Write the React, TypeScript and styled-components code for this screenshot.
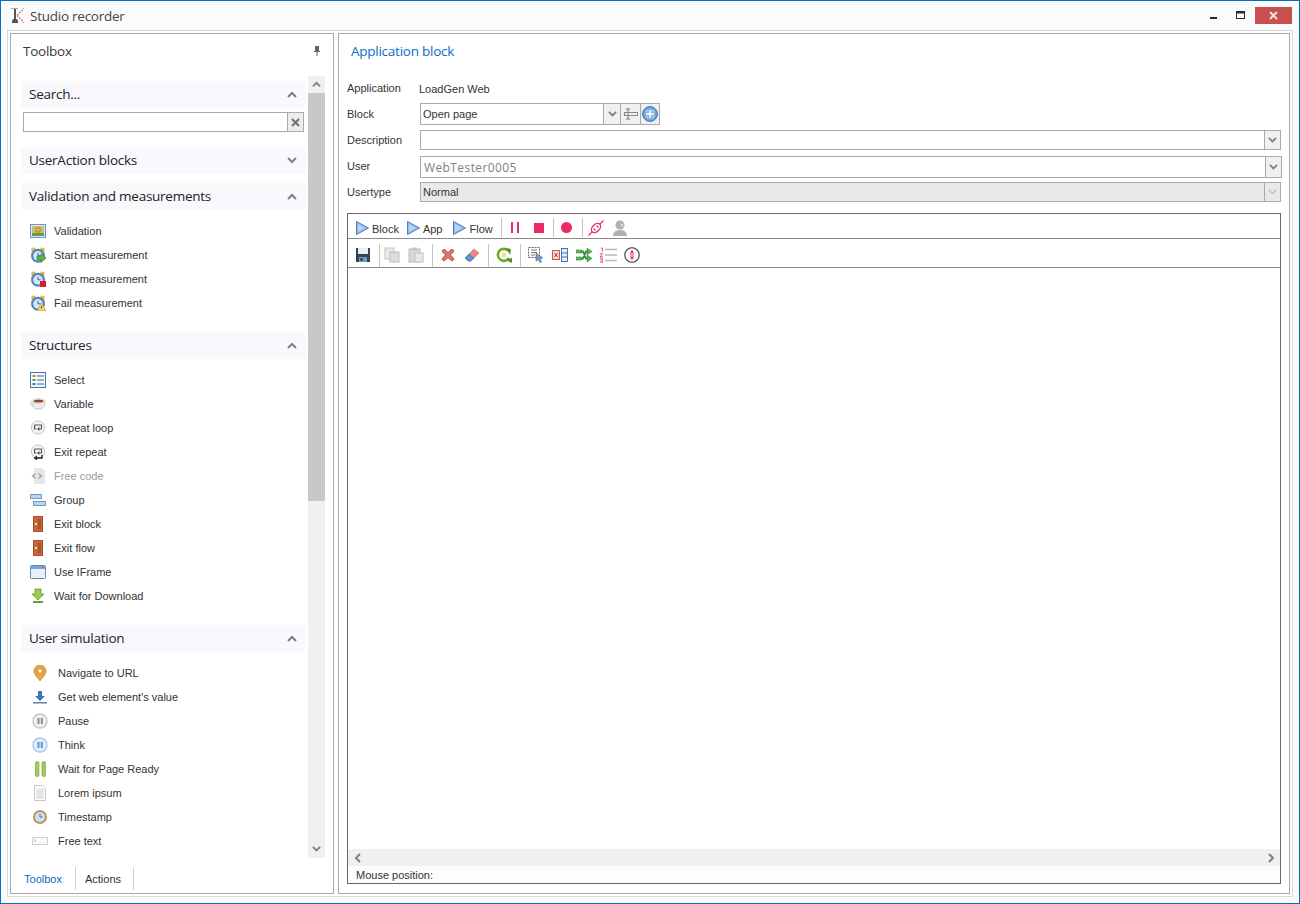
import styled, { createGlobalStyle } from "styled-components";
import type { ReactNode } from "react";

const GlobalStyle = createGlobalStyle`
  html, body {
    margin: 0;
    padding: 0;
    background: #fbfbfb;
  }
  * {
    box-sizing: border-box;
  }
`;

const UI_FONT = `"Open Sans", "Noto Sans", "Liberation Sans", sans-serif`;
const SMALL_FONT = `"Liberation Sans", "Noto Sans", sans-serif`;

const Window = styled.div`
  width: 1300px;
  height: 904px;
  display: flex;
  flex-direction: column;
  border: 1px solid #0072c6;
  background: #fbfbfb;
  padding: 0 6px 6px 6px;
  font-family: ${SMALL_FONT};
  overflow: hidden;
`;

const TitleBar = styled.div`
  height: 29px;
  flex: none;
  display: flex;
  align-items: center;
  padding-left: 3px;
`;

const TitleText = styled.span`
  font-family: ${UI_FONT};
  font-size: 13.5px;
  letter-spacing: -0.25px;
  color: #444;
  margin-left: 4px;
  flex: 1;
`;

const WinButtons = styled.div`
  display: flex;
  align-items: flex-start;
  height: 100%;
`;

const WinBtn = styled.div<{ $w: number }>`
  width: ${(p) => p.$w}px;
  height: 17px;
  margin-top: 6px;
  display: flex;
  align-items: center;
  justify-content: center;
`;

const CloseBtn = styled(WinBtn)`
  background: #c75050;
  margin-left: 1px;
  margin-right: 1px;
`;

const Frame = styled.div`
  flex: 1;
  min-height: 0;
  display: flex;
  gap: 4px;
  padding: 2px;
  border: 1px solid #d8d8d8;
  background: #fff;
`;

const Panel = styled.div<{ $w: number }>`
  width: ${(p) => p.$w}px;
  flex: none;
  display: flex;
  flex-direction: column;
  border: 1px solid #a9a9a9;
  background: #fff;
`;

const PanelHead = styled.div`
  height: 42px;
  flex: none;
  display: flex;
  align-items: center;
  justify-content: space-between;
  padding: 0 12px 8px 12px;
`;

const PanelTitle = styled.span<{ $blue?: boolean }>`
  font-family: ${UI_FONT};
  font-size: 13.5px;
  letter-spacing: -0.25px;
  color: ${(p) => (p.$blue ? "#0a6cc4" : "#3a3a3a")};
`;

const Scroller = styled.div`
  flex: 1;
  min-height: 0;
  display: flex;
  gap: 2px;
  padding: 0 8px 0 10px;
`;

const ToolList = styled.div`
  width: 285px;
  flex: none;
  padding-top: 5px;
`;

const SectionHead = styled.div<{ $mt: number }>`
  height: 27px;
  margin-top: ${(p) => p.$mt}px;
  display: flex;
  align-items: center;
  justify-content: space-between;
  padding: 0 9px 1px 8px;
  background: #f8f8fd;
  font-family: ${UI_FONT};
  font-size: 13.5px;
  letter-spacing: -0.25px;
  color: #222;
`;

const SearchBox = styled.div`
  height: 20px;
  margin: 4px 2px 0 2px;
  display: flex;
  justify-content: flex-end;
  border: 1px solid #aaa;
  background: #fff;
`;

const ClearBtn = styled.div`
  width: 16px;
  display: flex;
  align-items: center;
  justify-content: center;
  background: #ececec;
  border-left: 1px solid #aaa;
`;

const ItemList = styled.div`
  padding-top: 9px;
`;

const Item = styled.div<{ $wide?: boolean; $off?: boolean }>`
  height: 24px;
  display: flex;
  align-items: center;
  gap: ${(p) => (p.$wide ? 10 : 8)}px;
  padding-left: ${(p) => (p.$wide ? 11 : 9)}px;
  font-size: 11px;
  color: ${(p) => (p.$off ? "#9a9a9a" : "#333")};
`;

const VScroll = styled.div`
  width: 17px;
  flex: none;
  display: flex;
  flex-direction: column;
  background: #f0f0f0;
`;

const ScrollArrow = styled.div`
  height: 17px;
  flex: none;
  display: flex;
  align-items: center;
  justify-content: center;
`;

const VThumb = styled.div`
  height: 408px;
  flex: none;
  background: #c8c8c8;
`;

const VRest = styled.div`
  flex: 1;
`;

const Tabs = styled.div`
  height: 23px;
  flex: none;
  margin: 9px 0 3px 0;
  display: flex;
`;

const Tab = styled.div<{ $w: number; $on?: boolean }>`
  width: ${(p) => p.$w}px;
  display: flex;
  align-items: center;
  justify-content: center;
  padding-right: ${(p) => (p.$on ? 0 : 3)}px;
  border-right: 1px solid #d0d0d0;
  font-size: 11px;
  color: ${(p) => (p.$on ? "#0a6cc4" : "#333")};
`;

const Form = styled.div`
  flex: none;
  display: flex;
  flex-direction: column;
  padding: 2px 8px 0 8px;
`;

const FormRow = styled.div<{ $h: number; $mt: number }>`
  height: ${(p) => p.$h}px;
  margin-top: ${(p) => p.$mt}px;
  display: flex;
  align-items: center;
  font-size: 11px;
  color: #333;
`;

const Label = styled.span<{ $up?: boolean }>`
  width: 73px;
  flex: none;
  position: relative;
  top: ${(p) => (p.$up ? -1 : 0)}px;
`;

const PlainValue = styled.span`
  margin-left: -1px;
  position: relative;
  top: 1px;
`;

const Combo = styled.div<{ $w?: number; $over?: boolean; $off?: boolean }>`
  ${(p) => (p.$w ? `width: ${p.$w}px;` : "flex: 1;")}
  ${(p) => (p.$over ? "margin-right: -1px;" : "")}
  height: 100%;
  display: flex;
  border: 1px solid #aaa;
  background: ${(p) => (p.$off ? "#e9e9e9" : "#fff")};
`;

const ComboText = styled.div<{ $big?: boolean; $grey?: boolean }>`
  flex: 1;
  display: flex;
  align-items: center;
  padding-left: ${(p) => (p.$big ? 3 : 2)}px;
  font-family: ${(p) => (p.$big ? UI_FONT : SMALL_FONT)};
  font-size: ${(p) => (p.$big ? 12 : 11)}px;
  letter-spacing: ${(p) => (p.$big ? "0.4px" : "0")};
  color: ${(p) => (p.$grey ? "#808080" : "#333")};
`;

const ComboBtn = styled.div<{ $w: number; $off?: boolean }>`
  width: ${(p) => p.$w}px;
  flex: none;
  display: flex;
  align-items: center;
  justify-content: center;
  border-left: 1px solid #aaa;
  background: ${(p) => (p.$off ? "#e9e9e9" : "#f0f0f0")};
`;

const Designer = styled.div`
  flex: 1;
  min-height: 0;
  margin: 11px 8px 9px 8px;
  display: flex;
  flex-direction: column;
  border: 1px solid #666;
`;

const ToolRow = styled.div<{ $h: number; $pl: number; $pt: number }>`
  height: ${(p) => p.$h}px;
  flex: none;
  display: flex;
  align-items: center;
  padding-left: ${(p) => p.$pl}px;
  padding-top: ${(p) => p.$pt}px;
  border-bottom: 1px solid #8a8a8a;
`;

const TextTool = styled.div<{ $ml?: number }>`
  display: flex;
  align-items: center;
  gap: 3px;
  margin-left: ${(p) => p.$ml ?? 0}px;
  font-size: 11px;
  color: #333;
  line-height: 14px;
`;

const ToolLabel = styled.span`
  position: relative;
  top: 1px;
`;

const IconTool = styled.div`
  width: 24px;
  height: 20px;
  flex: none;
  display: flex;
  align-items: center;
  justify-content: center;
`;

const Sep = styled.div<{ $l: number; $r: number; $h: number }>`
  width: 1px;
  height: ${(p) => p.$h}px;
  flex: none;
  margin: 0 ${(p) => p.$r}px 0 ${(p) => p.$l}px;
  background: #c4c4c4;
`;

const Canvas = styled.div`
  flex: 1;
  background: #fff;
`;

const HScroll = styled.div`
  height: 17px;
  flex: none;
  display: flex;
  align-items: center;
  justify-content: space-between;
  padding: 0 5px 0 6px;
  background: #f0f0f0;
`;

const StatusBar = styled.div`
  height: 17px;
  flex: none;
  display: flex;
  align-items: center;
  padding-left: 8px;
  background: #fdfdfd;
  font-size: 11px;
  color: #333;
`;

const Svg = ({ w = 16, h = 16, children }: { w?: number; h?: number; children: ReactNode }) => (
  <svg width={w} height={h} viewBox={`0 0 ${w} ${h}`} style={{ flex: "none", display: "block" }}>
    {children}
  </svg>
);

const Chevron = ({ up, color = "#808080", size = 10 }: { up?: boolean; color?: string; size?: number }) => (
  <svg width={size} height={size * 0.7} viewBox="0 0 10 7" style={{ display: "block" }}>
    <polyline points={up ? "1,6 5,2 9,6" : "1,1 5,5 9,1"} fill="none" stroke={color} strokeWidth="2" />
  </svg>
);

const ChevronSide = ({ left }: { left?: boolean }) => (
  <svg width="7" height="10" viewBox="0 0 7 10" style={{ display: "block" }}>
    <polyline points={left ? "6,1 2,5 6,9" : "1,1 5,5 1,9"} fill="none" stroke="#808080" strokeWidth="2" />
  </svg>
);

const Logo = () => (
  <Svg w={16} h={17}>
    <path d="M4 2h2v10H4zM3 12h4l1 2v2H2v-2z" fill="#555" />
    <path d="M1 1.5h7" stroke="#aaa" strokeWidth="1" />
    <path d="M7 8.5L14 1.5M7 8.5l7 7" stroke="#e2657f" strokeWidth="1.2" strokeDasharray="2 1" fill="none" />
  </Svg>
);

const PinIcon = () => (
  <Svg w={8} h={10}>
    <path d="M2 0h4v5h1v1H1V5h1zM3.5 6h1v4h-1z" fill="#666" />
  </Svg>
);

const XMark = ({ color = "#707070" }: { color?: string }) => (
  <svg width="9" height="9" viewBox="0 0 9 9" style={{ display: "block" }}>
    <path d="M1 1l7 7M8 1L1 8" stroke={color} strokeWidth="2" />
  </svg>
);

const ValidationIcon = () => (
  <Svg>
    <rect x="0.5" y="1.5" width="15" height="13" fill="#dfe8f4" stroke="#7c8fc0" />
    <rect x="2" y="3" width="12" height="10" fill="#b8c870" />
    <rect x="2" y="10" width="12" height="3" fill="#5fa04a" />
    <circle cx="8" cy="7" r="3" fill="#d98a3c" />
    <circle cx="8" cy="7" r="1" fill="#f3d488" />
  </Svg>
);

const ClockBase = ({ children }: { children?: ReactNode }) => (
  <Svg>
    <circle cx="3.5" cy="2.8" r="2.3" fill="#e8b73e" />
    <circle cx="12.5" cy="2.8" r="2.3" fill="#e8b73e" />
    <circle cx="8" cy="8.8" r="7" fill="#4d86bd" />
    <circle cx="8" cy="8.8" r="4.8" fill="#d6e6f5" />
    <path d="M8 5.8v3h2.5" fill="none" stroke="#44607c" strokeWidth="1" />
    {children}
  </Svg>
);

const StartClock = () => (
  <ClockBase>
    <path d="M7 9h4V6.5L16 11l-5 4.5V13H7z" fill="#5cb050" stroke="#2f7a30" strokeWidth="0.6" />
  </ClockBase>
);

const StopClock = () => (
  <ClockBase>
    <rect x="10" y="10" width="6" height="6" fill="#e01b2f" />
  </ClockBase>
);

const FailClock = () => (
  <ClockBase>
    <path d="M11.5 8l4.5 8H7z" fill="#f2d36a" stroke="#b8923a" strokeWidth="0.6" />
    <path d="M11.5 11v2.4" stroke="#7a5a1a" strokeWidth="1" />
  </ClockBase>
);

const SelectIcon = () => (
  <Svg>
    <rect x="0.5" y="0.5" width="15" height="15" fill="#f4f8fd" stroke="#3f78b5" />
    <rect x="2.5" y="3" width="3" height="2" fill="#c9823a" />
    <rect x="2.5" y="7" width="3" height="2" fill="#5b9c40" />
    <rect x="2.5" y="11" width="3" height="2" fill="#3f78b5" />
    <path d="M7 4h7M7 8h7M7 12h7" stroke="#44638a" strokeWidth="1" />
  </Svg>
);

const CupIcon = () => (
  <Svg>
    <path d="M2 5h13c0 5-2 8-4.5 8h-4C4 13 2 10 2 5z" fill="#ececec" stroke="#c4c4c4" />
    <path d="M2 6C-1 6 0 10 3 10" fill="none" stroke="#c4c4c4" />
    <ellipse cx="8.5" cy="5" rx="6.5" ry="2.4" fill="#fafafa" stroke="#c4c4c4" strokeWidth="0.6" />
    <ellipse cx="8.5" cy="5" rx="5" ry="1.6" fill="#8b4a32" />
  </Svg>
);

const LoopGlyph = () => (
  <>
    <circle cx="8" cy="7.5" r="6.6" fill="#f4f4f4" stroke="#c4c4c4" />
    <path d="M4.5 5h7v4H9.5M4.5 5v4h2" fill="none" stroke="#555" strokeWidth="1.1" />
    <path d="M9.5 7v4L7 9z" fill="#555" />
  </>
);

const RepeatIcon = () => (
  <Svg>
    <LoopGlyph />
  </Svg>
);

const ExitRepeatIcon = () => (
  <Svg>
    <LoopGlyph />
    <path d="M12 11v3H6" fill="none" stroke="#222" strokeWidth="1.4" />
    <path d="M7 11.5v5L3.5 14z" fill="#222" />
  </Svg>
);

const CodeIcon = () => (
  <Svg>
    <path d="M4 0h8l3 3v13H4z" fill="#e6e6e6" />
    <path d="M5 5L1.5 8 5 11l1-1-2-2 2-2zM9 5l3.5 3L9 11l-1-1 2-2-2-2z" fill="#a8a8a8" />
  </Svg>
);

const GroupIcon = () => (
  <Svg>
    <rect x="0.5" y="2.5" width="11" height="4" fill="#bcd4ec" stroke="#6e9cc8" />
    <rect x="3.5" y="9.5" width="12" height="4" fill="#bcd4ec" stroke="#6e9cc8" />
  </Svg>
);

const DoorIcon = () => (
  <Svg>
    <rect x="3" y="0" width="10" height="16" fill="#a9492a" />
    <rect x="4" y="1" width="8" height="14" fill="#c26a3a" />
    <rect x="8" y="3" width="3" height="10" fill="#a9552c" />
    <rect x="5" y="7" width="2" height="2" fill="#f5e3c8" />
  </Svg>
);

const FrameIcon = () => (
  <Svg>
    <rect x="0.5" y="1.5" width="15" height="13" rx="1" fill="#e9f0f9" stroke="#5b8cc0" />
    <rect x="1" y="2" width="14" height="3" fill="#79a6d6" />
    <rect x="12" y="2.5" width="2" height="1.5" fill="#d9534f" />
  </Svg>
);

const DownloadIcon = () => (
  <Svg>
    <path d="M5 1h6v5h3l-6 6-6-6h3z" fill="#9ccc50" stroke="#5a8f2c" strokeWidth="0.7" />
    <rect x="3" y="13" width="10" height="2" fill="#6a9a3a" />
  </Svg>
);

const PinMapIcon = () => (
  <Svg>
    <path d="M8 0a6 6 0 0 1 6 6c0 4-4 7-6 10-2-3-6-6-6-10a6 6 0 0 1 6-6z" fill="#eba23d" stroke="#c47f25" strokeWidth="0.6" />
    <circle cx="8" cy="6" r="2.4" fill="#fbeed0" stroke="#a9721f" strokeWidth="0.6" />
  </Svg>
);

const ArrowDownIcon = () => (
  <Svg>
    <path d="M6 2h4v5h3l-5 5-5-5h3z" fill="#3b78b8" />
    <rect x="1" y="13" width="14" height="1.5" fill="#5a7fa6" />
  </Svg>
);

const PauseIcon = ({ blue }: { blue?: boolean }) => (
  <Svg>
    <circle cx="8" cy="8" r="7" fill={blue ? "#e4eefa" : "#f0f0f0"} stroke={blue ? "#a8c8ec" : "#c6c6c6"} strokeWidth="1.4" />
    <path d="M5.5 5h2v6h-2zM8.8 5h2v6h-2z" fill={blue ? "#5a93d6" : "#8a8a8a"} />
  </Svg>
);

const GreenPauseIcon = () => (
  <Svg>
    <rect x="3.5" y="0.5" width="3.4" height="15" rx="1.5" fill="#a4cc58" stroke="#74a036" strokeWidth="0.7" />
    <rect x="10" y="0.5" width="3.4" height="15" rx="1.5" fill="#a4cc58" stroke="#74a036" strokeWidth="0.7" />
  </Svg>
);

const DocIcon = () => (
  <Svg>
    <path d="M2.5 0.5h8l3 3v12h-11z" fill="#fbfbfb" stroke="#c8c8c8" />
    <path d="M4.5 5h7M4.5 7h7M4.5 9h7M4.5 11h7M4.5 13h7" stroke="#c4c4c4" strokeWidth="0.9" />
  </Svg>
);

const TimestampIcon = () => (
  <Svg>
    <circle cx="8" cy="8" r="7" fill="#b8975a" />
    <circle cx="8" cy="8" r="5" fill="#cfe0f5" />
    <path d="M8 4.5V8h2.5" fill="none" stroke="#3c6ba4" strokeWidth="1" />
  </Svg>
);

const TextFieldIcon = () => (
  <Svg>
    <rect x="0.5" y="4.5" width="15" height="7" fill="#fafafa" stroke="#cfcfcf" />
    <path d="M3 6v3" stroke="#bdbdbd" />
  </Svg>
);

const ComboDrop = () => <Chevron color="#808080" size={9} />;

const AttachIcon = () => (
  <Svg w={14} h={12}>
    <path d="M4 1v10M2 1h4M2 11h4" stroke="#777" fill="none" />
    <rect x="0.5" y="4.5" width="13" height="3" fill="none" stroke="#888" />
  </Svg>
);

const AddIcon = () => (
  <Svg>
    <circle cx="8" cy="8" r="7.4" fill="#6ca0dc" stroke="#3f73b5" />
    <circle cx="8" cy="8" r="5.4" fill="#a4c8ee" />
    <path d="M6.8 3.5h2.4v3.3h3.3v2.4H9.2v3.3H6.8V9.2H3.5V6.8h3.3z" fill="#fff" stroke="#3f73b5" strokeWidth="0.5" />
  </Svg>
);

const PlayIcon = () => (
  <Svg w={13} h={14}>
    <path d="M0.5 0.5L12.5 7 0.5 13.5z" fill="#8fb9e8" stroke="#4b83c2" />
    <path d="M2 3v8l7-4z" fill="#b8d4f2" />
  </Svg>
);

const PINK = "#ec2a63";

const PauseBars = () => (
  <Svg w={10} h={11}>
    <rect x="1" y="0" width="2" height="11" fill={PINK} />
    <rect x="7" y="0" width="2" height="11" fill={PINK} />
  </Svg>
);

const StopSquare = () => (
  <Svg w={10} h={10}>
    <rect width="10" height="10" fill={PINK} />
  </Svg>
);

const RecordDot = () => (
  <Svg w={11} h={11}>
    <circle cx="5.5" cy="5.5" r="5.5" fill={PINK} />
  </Svg>
);

const LinkIcon = () => (
  <Svg>
    <ellipse cx="8" cy="8" rx="3.6" ry="5.4" transform="rotate(45 8 8)" fill="#fff" stroke={PINK} strokeWidth="1.3" />
    <path d="M0.5 15.5l3.5-3.5M12 4l3.5-3.5M5.5 8.5l2 2M8.5 5.5l2 2" stroke={PINK} strokeWidth="1.2" />
  </Svg>
);

const PersonIcon = () => (
  <Svg>
    <circle cx="8" cy="5" r="4.6" fill="#b0b0b0" />
    <path d="M1 16c0-4 3-6 7-6s7 2 7 6z" fill="#b0b0b0" />
    <path d="M8.5 3.5l3 3M11.5 3.5l-3 3" stroke="#e4e4e4" />
  </Svg>
);

const SaveIcon = () => (
  <Svg>
    <path d="M1 1h14v14H1z" fill="#2e4560" />
    <rect x="3" y="1" width="10" height="6" fill="#e8eef5" />
    <rect x="4" y="10" width="8" height="5" fill="#7f96b0" />
    <rect x="5.5" y="11" width="2" height="3" fill="#24374e" />
  </Svg>
);

const CopyIcon = () => (
  <Svg>
    <rect x="1" y="1" width="9" height="11" fill="#e8e8e8" stroke="#c4c4c4" />
    <rect x="6" y="5" width="9" height="10" fill="#dcdcdc" stroke="#bcbcbc" />
  </Svg>
);

const PasteIcon = () => (
  <Svg>
    <rect x="1" y="2" width="11" height="13" fill="#d8d8d8" stroke="#bcbcbc" />
    <rect x="4" y="0.5" width="5" height="3" fill="#c4c4c4" />
    <rect x="7" y="6" width="8" height="9" fill="#e8e8e8" stroke="#c0c0c0" />
  </Svg>
);

const DeleteIcon = () => (
  <Svg>
    <path d="M4 4l8 8M12 4l-8 8" stroke="#bf5a48" strokeWidth="4" strokeLinecap="round" />
    <path d="M4 4l8 8M12 4l-8 8" stroke="#e07a68" strokeWidth="2" strokeLinecap="round" />
  </Svg>
);

const EraserIcon = () => (
  <Svg>
    <path d="M1 11L10 2l5 4-8 8H4z" fill="#e68a80" stroke="#bf6259" strokeWidth="0.6" />
    <path d="M1 11l4-4 5 4-3 3H4z" fill="#5c94d8" stroke="#3f73b5" strokeWidth="0.6" />
  </Svg>
);

const RefreshIcon = () => (
  <Svg>
    <path d="M13 11A6 6 0 1 1 12.5 4" fill="none" stroke="#6aa832" strokeWidth="2.6" />
    <path d="M10 1l5 1-1 6z" fill="#4f8f24" />
    <path d="M10 13l6-2v5z" fill="#4f8f24" />
    <circle cx="8" cy="8" r="2.4" fill="#eede9a" />
  </Svg>
);

const PickIcon = () => (
  <Svg>
    <rect x="0.5" y="0.5" width="11" height="10" fill="none" stroke="#666" strokeDasharray="2 1" />
    <path d="M3 3h6M3 5.5h6M3 8h4" stroke="#777" />
    <path d="M8 6l7 5-3 .8L13.5 15l-1.5.8-1.5-3L8 14z" fill="#7a9cc8" stroke="#3d5f8c" strokeWidth="0.5" />
  </Svg>
);

const ColumnsIcon = () => (
  <Svg>
    <rect x="0.5" y="3.5" width="7" height="9" fill="#f6d9d0" stroke="#c2594a" />
    <path d="M2.5 6l3 4M5.5 6l-3 4" stroke="#b8362a" />
    <rect x="9.5" y="1.5" width="6" height="13" fill="#e4effa" stroke="#3f78b5" />
    <path d="M9.5 6h6M9.5 10h6" stroke="#3f78b5" />
  </Svg>
);

const ShuffleIcon = () => (
  <Svg>
    <rect x="0.5" y="3" width="5" height="3" fill="#66b85a" stroke="#2f7a3a" strokeWidth="0.6" />
    <rect x="0.5" y="10" width="5" height="3" fill="#66b85a" stroke="#2f7a3a" strokeWidth="0.6" />
    <path d="M5 4.5h2l3 7h2M5 11.5h2l3-7h2" fill="none" stroke="#2f8f3c" strokeWidth="1.8" />
    <path d="M11 1l5 3.5L11 8zM11 8l5 3.5L11 15z" fill="#58b04e" stroke="#2f7a3a" strokeWidth="0.5" />
  </Svg>
);

const NumberedIcon = () => (
  <Svg w={18} h={16}>
    <path d="M2 1h1.4v3.5M1 7l1.5-1 1 1-2.5 3h3M1 12h3l-1.5 1.5L4 15H1" fill="none" stroke={PINK} strokeWidth="0.9" />
    <path d="M6 2.5h12M6 8h12M6 13.5h12" stroke="#b8b8b8" strokeWidth="1.4" />
  </Svg>
);

const CompassIcon = () => (
  <Svg>
    <circle cx="8" cy="8" r="7.2" fill="#fff" stroke="#333" strokeWidth="1.1" />
    <path d="M8 2.5L10 6.5H6zM8 13.5L6 9.5h4z" fill={PINK} />
    <path d="M6 8h4" stroke={PINK} />
  </Svg>
);

const TitleX = () => <XMark color="#f4e0e0" />;

type ToolItem = { label: string; icon: ReactNode; off?: boolean };

const validationItems: ToolItem[] = [
  { label: "Validation", icon: <ValidationIcon /> },
  { label: "Start measurement", icon: <StartClock /> },
  { label: "Stop measurement", icon: <StopClock /> },
  { label: "Fail measurement", icon: <FailClock /> },
];

const structureItems: ToolItem[] = [
  { label: "Select", icon: <SelectIcon /> },
  { label: "Variable", icon: <CupIcon /> },
  { label: "Repeat loop", icon: <RepeatIcon /> },
  { label: "Exit repeat", icon: <ExitRepeatIcon /> },
  { label: "Free code", icon: <CodeIcon />, off: true },
  { label: "Group", icon: <GroupIcon /> },
  { label: "Exit block", icon: <DoorIcon /> },
  { label: "Exit flow", icon: <DoorIcon /> },
  { label: "Use IFrame", icon: <FrameIcon /> },
  { label: "Wait for Download", icon: <DownloadIcon /> },
];

const simulationItems: ToolItem[] = [
  { label: "Navigate to URL", icon: <PinMapIcon /> },
  { label: "Get web element's value", icon: <ArrowDownIcon /> },
  { label: "Pause", icon: <PauseIcon /> },
  { label: "Think", icon: <PauseIcon blue /> },
  { label: "Wait for Page Ready", icon: <GreenPauseIcon /> },
  { label: "Lorem ipsum", icon: <DocIcon /> },
  { label: "Timestamp", icon: <TimestampIcon /> },
  { label: "Free text", icon: <TextFieldIcon /> },
];

const Section = ({ title, mt, up, children }: { title: string; mt: number; up?: boolean; children?: ReactNode }) => (
  <>
    <SectionHead $mt={mt}>
      {title}
      <Chevron up={up} />
    </SectionHead>
    {children}
  </>
);

const Items = ({ items, wide }: { items: ToolItem[]; wide?: boolean }) => (
  <ItemList>
    {items.map((item) => (
      <Item key={item.label} $wide={wide} $off={item.off}>
        {item.icon}
        {item.label}
      </Item>
    ))}
  </ItemList>
);

const App = () => {
  return (
    <>
      <GlobalStyle />
      <Window>
        <TitleBar>
          <Logo />
          <TitleText>Studio recorder</TitleText>
          <WinButtons>
            <WinBtn $w={27}>
              <Svg w={9} h={9}>
                <rect x="1" y="6" width="7" height="2" fill="#2b2b2b" />
              </Svg>
            </WinBtn>
            <WinBtn $w={27}>
              <Svg w={10} h={9}>
                <rect x="0.5" y="0.5" width="8" height="7" fill="none" stroke="#2b2b2b" />
                <rect x="1" y="1" width="7" height="1.5" fill="#2b2b2b" />
              </Svg>
            </WinBtn>
            <CloseBtn $w={37}>
              <TitleX />
            </CloseBtn>
          </WinButtons>
        </TitleBar>
        <Frame>
          <Panel $w={324}>
            <PanelHead>
              <PanelTitle>Toolbox</PanelTitle>
              <PinIcon />
            </PanelHead>
            <Scroller>
              <ToolList>
                <Section title="Search..." mt={0} up>
                  <SearchBox>
                    <ClearBtn>
                      <XMark />
                    </ClearBtn>
                  </SearchBox>
                </Section>
                <Section title="UserAction blocks" mt={15} />
                <Section title="Validation and measurements" mt={9} up>
                  <Items items={validationItems} />
                </Section>
                <Section title="Structures" mt={17} up>
                  <Items items={structureItems} />
                </Section>
                <Section title="User simulation" mt={17} up>
                  <Items items={simulationItems} wide />
                </Section>
              </ToolList>
              <VScroll>
                <ScrollArrow>
                  <Chevron up size={9} />
                </ScrollArrow>
                <VThumb />
                <VRest />
                <ScrollArrow>
                  <Chevron size={9} />
                </ScrollArrow>
              </VScroll>
            </Scroller>
            <Tabs>
              <Tab $w={65} $on>
                Toolbox
              </Tab>
              <Tab $w={58}>Actions</Tab>
            </Tabs>
          </Panel>
          <Panel $w={952}>
            <PanelHead>
              <PanelTitle $blue>Application block</PanelTitle>
            </PanelHead>
            <Form>
              <FormRow $h={20} $mt={0}>
                <Label>Application</Label>
                <PlainValue>LoadGen Web</PlainValue>
              </FormRow>
              <FormRow $h={22} $mt={5}>
                <Label>Block</Label>
                <Combo $w={240}>
                  <ComboText>Open page</ComboText>
                  <ComboBtn $w={17}>
                    <ComboDrop />
                  </ComboBtn>
                  <ComboBtn $w={20}>
                    <AttachIcon />
                  </ComboBtn>
                  <ComboBtn $w={19}>
                    <AddIcon />
                  </ComboBtn>
                </Combo>
              </FormRow>
              <FormRow $h={20} $mt={5}>
                <Label>Description</Label>
                <Combo>
                  <ComboText />
                  <ComboBtn $w={16}>
                    <ComboDrop />
                  </ComboBtn>
                </Combo>
              </FormRow>
              <FormRow $h={22} $mt={6}>
                <Label $up>User</Label>
                <Combo $over>
                  <ComboText $big $grey>
                    WebTester0005
                  </ComboText>
                  <ComboBtn $w={16}>
                    <ComboDrop />
                  </ComboBtn>
                </Combo>
              </FormRow>
              <FormRow $h={20} $mt={4}>
                <Label>Usertype</Label>
                <Combo $off>
                  <ComboText>Normal</ComboText>
                  <ComboBtn $w={16} $off>
                    <Chevron color="#c4c4c4" size={9} />
                  </ComboBtn>
                </Combo>
              </FormRow>
            </Form>
            <Designer>
              <ToolRow $h={25} $pl={8} $pt={3}>
                <TextTool>
                  <PlayIcon />
                  <ToolLabel>Block</ToolLabel>
                </TextTool>
                <TextTool $ml={8}>
                  <PlayIcon />
                  <ToolLabel>App</ToolLabel>
                </TextTool>
                <TextTool $ml={11}>
                  <PlayIcon />
                  <ToolLabel>Flow</ToolLabel>
                </TextTool>
                <Sep $l={8} $r={1} $h={19} />
                <IconTool>
                  <PauseBars />
                </IconTool>
                <IconTool>
                  <StopSquare />
                </IconTool>
                <Sep $l={2} $r={1} $h={19} />
                <IconTool>
                  <RecordDot />
                </IconTool>
                <Sep $l={3} $r={1} $h={19} />
                <IconTool>
                  <LinkIcon />
                </IconTool>
                <IconTool>
                  <PersonIcon />
                </IconTool>
              </ToolRow>
              <ToolRow $h={29} $pl={3} $pt={4}>
                <IconTool>
                  <SaveIcon />
                </IconTool>
                <Sep $l={4} $r={0} $h={23} />
                <IconTool>
                  <CopyIcon />
                </IconTool>
                <IconTool>
                  <PasteIcon />
                </IconTool>
                <Sep $l={4} $r={3} $h={23} />
                <IconTool>
                  <DeleteIcon />
                </IconTool>
                <IconTool>
                  <EraserIcon />
                </IconTool>
                <Sep $l={4} $r={3} $h={23} />
                <IconTool>
                  <RefreshIcon />
                </IconTool>
                <Sep $l={4} $r={3} $h={23} />
                <IconTool>
                  <PickIcon />
                </IconTool>
                <IconTool>
                  <ColumnsIcon />
                </IconTool>
                <IconTool>
                  <ShuffleIcon />
                </IconTool>
                <IconTool>
                  <NumberedIcon />
                </IconTool>
                <IconTool>
                  <CompassIcon />
                </IconTool>
              </ToolRow>
              <Canvas />
              <HScroll>
                <ChevronSide left />
                <ChevronSide />
              </HScroll>
              <StatusBar>Mouse position:</StatusBar>
            </Designer>
          </Panel>
        </Frame>
      </Window>
    </>
  );
};

export default App;
